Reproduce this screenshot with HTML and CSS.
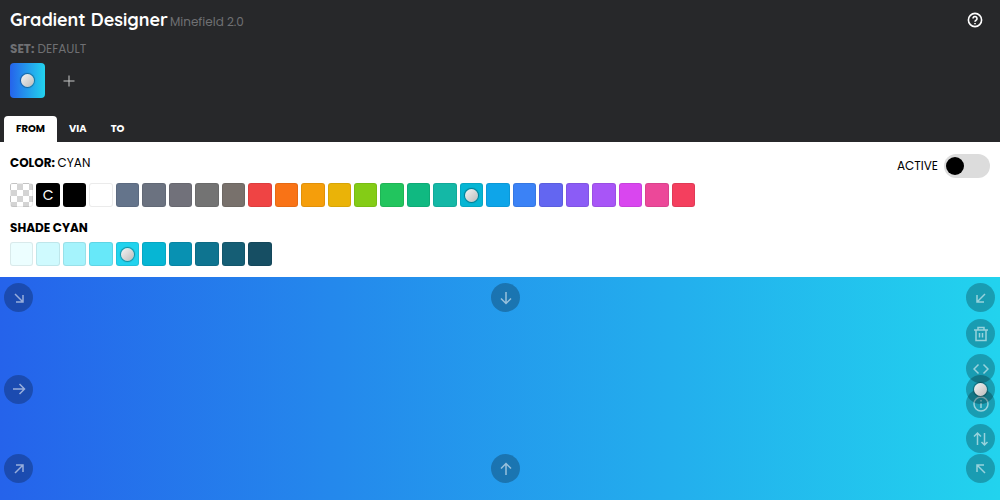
FILE: index.html
```
<!DOCTYPE html>
<html lang="en">
<head>
    <meta charset="UTF-8">
    <meta name="viewport" content="width=device-width, initial-scale=1.0">
    <title>Gradient Designer</title>
    <link rel="stylesheet" href="styles.css">
</head>
<body>
    <header class="header">
        <div class="title-bar">
            <h1 class="title">Gradient Designer</h1>
            <span class="version">Minefield 2.0</span>
            <button class="help-button" type="button" aria-label="Help">
                <svg viewBox="0 0 16 16"><circle cx="8" cy="8" r="6.6"/><path d="M6 6.5a2 2 0 1 1 3.1 1.7C8.3 8.7 8 9 8 9.7M8 11v1.2"/></svg>
            </button>
        </div>
        <p class="set-label"><b>SET:</b> DEFAULT</p>
        <div class="set-list">
            <button class="set-item" type="button" aria-label="Gradient 1"><span class="knob"></span></button>
            <button class="add-button" type="button" aria-label="Add gradient">
                <svg viewBox="0 0 16 16"><path d="M8 2.5v11M2.5 8h11"/></svg>
            </button>
        </div>
        <nav class="tabs">
            <button class="tab tab-active" type="button">FROM</button>
            <button class="tab" type="button">VIA</button>
            <button class="tab" type="button">TO</button>
        </nav>
    </header>

    <section class="panel">
        <div class="panel-top">
            <h2 class="label">COLOR: <span class="label-value">CYAN</span></h2>
            <label class="active-label">ACTIVE <input class="switch" type="checkbox"></label>
        </div>
        <div class="swatches">
            <button class="swatch transparent" type="button" aria-label="Transparent"></button>
            <button class="swatch black" type="button" aria-label="Current">C</button>
            <button class="swatch black" type="button" aria-label="Black"></button>
            <button class="swatch white" type="button" aria-label="White"></button>
            <button class="swatch slate" type="button" aria-label="Slate"></button>
            <button class="swatch gray" type="button" aria-label="Gray"></button>
            <button class="swatch zinc" type="button" aria-label="Zinc"></button>
            <button class="swatch neutral" type="button" aria-label="Neutral"></button>
            <button class="swatch stone" type="button" aria-label="Stone"></button>
            <button class="swatch red" type="button" aria-label="Red"></button>
            <button class="swatch orange" type="button" aria-label="Orange"></button>
            <button class="swatch amber" type="button" aria-label="Amber"></button>
            <button class="swatch yellow" type="button" aria-label="Yellow"></button>
            <button class="swatch lime" type="button" aria-label="Lime"></button>
            <button class="swatch green" type="button" aria-label="Green"></button>
            <button class="swatch emerald" type="button" aria-label="Emerald"></button>
            <button class="swatch teal" type="button" aria-label="Teal"></button>
            <button class="swatch cyan" type="button" aria-label="Cyan"><span class="knob"></span></button>
            <button class="swatch sky" type="button" aria-label="Sky"></button>
            <button class="swatch blue" type="button" aria-label="Blue"></button>
            <button class="swatch indigo" type="button" aria-label="Indigo"></button>
            <button class="swatch violet" type="button" aria-label="Violet"></button>
            <button class="swatch purple" type="button" aria-label="Purple"></button>
            <button class="swatch fuchsia" type="button" aria-label="Fuchsia"></button>
            <button class="swatch pink" type="button" aria-label="Pink"></button>
            <button class="swatch rose" type="button" aria-label="Rose"></button>
        </div>
        <h2 class="label shade-label">SHADE CYAN</h2>
        <div class="swatches">
            <button class="swatch cyan-50" type="button" aria-label="50"></button>
            <button class="swatch cyan-100" type="button" aria-label="100"></button>
            <button class="swatch cyan-200" type="button" aria-label="200"></button>
            <button class="swatch cyan-300" type="button" aria-label="300"></button>
            <button class="swatch cyan-400" type="button" aria-label="400"><span class="knob"></span></button>
            <button class="swatch cyan" type="button" aria-label="500"></button>
            <button class="swatch cyan-600" type="button" aria-label="600"></button>
            <button class="swatch cyan-700" type="button" aria-label="700"></button>
            <button class="swatch cyan-800" type="button" aria-label="800"></button>
            <button class="swatch cyan-900" type="button" aria-label="900"></button>
        </div>
    </section>

    <!-- Gradient preview with direction buttons -->
    <main class="preview">
        <button class="round top left" type="button" aria-label="To bottom right"><svg viewBox="0 0 16 16"><path d="m4 4 8 8M12 5v7H5"/></svg></button>
        <button class="round top center" type="button" aria-label="To bottom"><svg viewBox="0 0 16 16"><path d="M8 2v11.5M3 8.5l5 5 5-5"/></svg></button>
        <button class="round top right" type="button" aria-label="To bottom left"><svg viewBox="0 0 16 16"><path d="m12 4-8 8M4 5v7h7"/></svg></button>
        <button class="round middle left" type="button" aria-label="To right"><svg viewBox="0 0 16 16"><path d="M2 8h11.5M8.5 3l5 5-5 5"/></svg></button>
        <button class="round bottom left" type="button" aria-label="To top right"><svg viewBox="0 0 16 16"><path d="m4 12 8-8M5 4h7v7"/></svg></button>
        <button class="round bottom center" type="button" aria-label="To top"><svg viewBox="0 0 16 16"><path d="M8 14V2.500M3 7.500l5-5 5 5"/></svg></button>
        <button class="round bottom right" type="button" aria-label="To top left"><svg viewBox="0 0 16 16"><path d="M12 12 4 4M4 11V4h7"/></svg></button>
        <div class="tools">
            <button class="round" type="button" aria-label="Delete"><svg viewBox="0 0 16 16"><path d="M1 4h14M5 4V1.500h6V4M3 4v10.500h10V4M6.500 7v4.500M9.500 7v4.500"/></svg></button>
            <button class="round" type="button" aria-label="Code"><svg viewBox="0 0 16 16"><path d="M5.500 3.500 1 8l4.500 4.500M10.500 3.500 15 8l-4.500 4.500"/></svg></button>
            <button class="round" type="button" aria-label="Info"><svg viewBox="0 0 16 16"><circle cx="8" cy="8" r="7"/><path d="M8 7v5M8 4v1.500"/></svg></button>
            <button class="round" type="button" aria-label="Swap"><svg viewBox="0 0 16 16"><path d="M4.500 14V2M1 5.500 4.500 2 8 5.500M11.500 2v12M8.500 11l3 3 3-3"/></svg></button>
        </div>
        <button class="round middle right" type="button" aria-label="To left"><span class="knob"></span></button>
    </main>
</body>
</html>
```
FILE: styles.css
```
* {
    box-sizing: border-box;
}
body {
    margin: 0;
    min-height: 100vh;
    display: flex;
    flex-direction: column;
    font-family: 'Poppins', 'Inter', sans-serif;
    font-size: 12px;
    line-height: 16px;
    color: #000;
    background: #fff;
}
button {
    border: none;
    padding: 0;
    margin: 0;
    font: inherit;
    color: inherit;
    background: none;
    cursor: pointer;
}
svg {
    display: block;
    width: 16px;
    height: 16px;
    fill: none;
    stroke: currentColor;
}
h1, h2, p {
    margin: 0;
}
.header {
    background: #27282a;
    color: #fff;
}
.title-bar {
    display: flex;
    align-items: baseline;
    gap: 2px;
    padding: 8px 10px 0;
}
.title {
    font-family: 'Quicksand', 'Lato', sans-serif;
    font-size: 18px;
    line-height: 24px;
    font-weight: 700;
}
.version {
    color: #6f7073;
}
.help-button {
    margin-left: auto;
    margin-right: 7px;
    align-self: center;
}
.help-button svg {
    stroke-width: 1.6;
}
.set-label {
    padding: 9px 10px 6px;
    color: #6f7073;
}
.set-list {
    display: flex;
    align-items: center;
    gap: 16px;
    padding: 0 10px;
}
.set-item {
    display: grid;
    place-items: center;
    width: 35px;
    height: 35px;
    border-radius: 4px;
    background: linear-gradient(to right, #2563eb, #22d3ee);
}
.knob {
    width: 13px;
    height: 13px;
    border-radius: 50%;
    background: linear-gradient(135deg, #f4f4f4, #bbb);
    box-shadow: 0 0 1px 1px rgba(0, 0, 0, 0.35);
}
.add-button {
    color: #c8c8c8;
}
.tabs {
    display: flex;
    padding: 18px 4px 0;
}
.tab {
    height: 26px;
    padding: 0 12px;
    font-size: 10px;
    font-weight: 700;
    border-radius: 4px 4px 0 0;
}
.tab-active {
    color: #000;
    background: #fff;
}
.panel {
    padding: 12px 10px 11px;
}
.panel-top {
    display: flex;
    justify-content: space-between;
    align-items: flex-start;
    height: 29px;
}
.label {
    padding-top: 1px;
    font-size: 12px;
    font-weight: 700;
}
.label-value {
    font-weight: 400;
}
.active-label {
    display: flex;
    align-items: center;
    gap: 6px;
}
.switch {
    appearance: none;
    display: flex;
    align-items: center;
    width: 46px;
    height: 24px;
    margin: 0;
    padding: 0 2px;
    border-radius: 12px;
    background: #dcdcdc;
    cursor: pointer;
}
.switch::before {
    content: '';
    width: 18px;
    height: 18px;
    border-radius: 50%;
    background: #000;
}
.switch:checked {
    justify-content: flex-end;
}
.swatches {
    display: grid;
    grid-template-columns: repeat(26, 1fr);
    gap: 3px;
    max-width: 685px;
}
.swatch {
    display: grid;
    place-items: center;
    height: 24px;
    border-radius: 3px;
    border: 1px solid rgba(0, 0, 0, 0.08);
}
.shade-label {
    padding: 13px 0 6px;
}
.transparent { background: repeating-conic-gradient(#d4d4d4 0 25%, #fff 0 50%) 0 0 / 12px 12px; }
.black { background-color: #000; color: #fff; font-size: 14px; }
.white { background-color: #fff; }
.slate { background-color: #64748b; }
.gray { background-color: #6b7280; }
.zinc { background-color: #71717a; }
.neutral { background-color: #737373; }
.stone { background-color: #78716c; }
.red { background-color: #ef4444; }
.orange { background-color: #f97316; }
.amber { background-color: #f59e0b; }
.yellow { background-color: #eab308; }
.lime { background-color: #84cc16; }
.green { background-color: #22c55e; }
.emerald { background-color: #10b981; }
.teal { background-color: #14b8a6; }
.cyan { background-color: #06b6d4; }
.sky { background-color: #0ea5e9; }
.blue { background-color: #3b82f6; }
.indigo { background-color: #6366f1; }
.violet { background-color: #8b5cf6; }
.purple { background-color: #a855f7; }
.fuchsia { background-color: #d946ef; }
.pink { background-color: #ec4899; }
.rose { background-color: #f43f5e; }
.cyan-50 { background-color: #ecfeff; }
.cyan-100 { background-color: #cffafe; }
.cyan-200 { background-color: #a5f3fc; }
.cyan-300 { background-color: #67e8f9; }
.cyan-400 { background-color: #22d3ee; }
.cyan-600 { background-color: #0891b2; }
.cyan-700 { background-color: #0e7490; }
.cyan-800 { background-color: #155e75; }
.cyan-900 { background-color: #164e63; }
.preview {
    flex: 1;
    min-height: 223px;
    position: relative;
    background: linear-gradient(to right, #2563eb, #22d3ee);
}
.round {
    display: grid;
    place-items: center;
    width: 29px;
    height: 29px;
    border-radius: 50%;
    background: rgba(0, 0, 0, 0.25);
    color: rgba(255, 255, 255, 0.55);
}
.round svg {
    stroke-width: 1.5;
}
.top, .middle, .bottom, .tools {
    position: absolute;
}
.top { top: 6px; }
.middle { top: calc(50% - 14px); }
.bottom { bottom: 17px; }
.left { left: 4px; }
.center { left: calc(50% - 9px); }
.right { right: 5px; }
.tools {
    top: 42px;
    right: 5px;
    display: flex;
    flex-direction: column;
    gap: 6px;
}
```
